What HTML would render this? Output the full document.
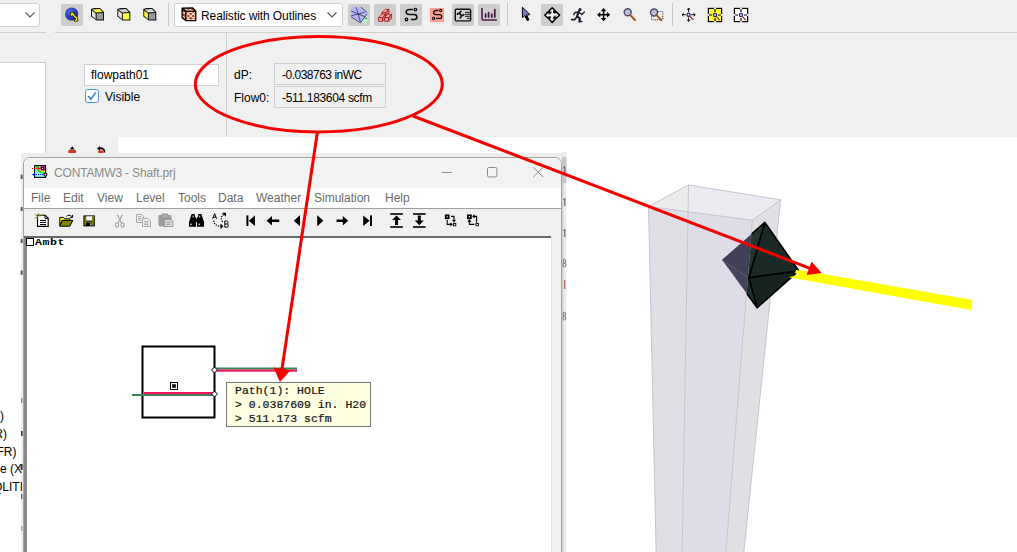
<!DOCTYPE html>
<html><head><meta charset="utf-8">
<style>
*{box-sizing:border-box;margin:0;padding:0}
html,body{width:1017px;height:552px;overflow:hidden;background:#f0f0f0;font-family:"Liberation Sans",sans-serif;font-size:12px;color:#000}
.a{position:absolute}
.t{position:absolute;white-space:nowrap;line-height:14px}
.btn{position:absolute;top:4px;width:22px;height:22px;background:#cdcdcd;border-radius:2px}
</style></head><body>
<!-- ===== main app background ===== -->
<div class="a" id="vp" style="left:118px;top:137px;width:899px;height:415px;background:#fff"></div>
<div class="a" style="left:0;top:62px;width:45px;height:490px;background:#fff;border-top:1px solid #cfcfcf"></div>
<div class="a" style="left:45px;top:62px;width:1px;height:490px;background:#cfcfcf"></div>
<div class="a" style="left:0;top:32px;width:46px;height:1px;background:#d0d0d0"></div>
<div class="a" style="left:55px;top:32px;width:962px;height:1px;background:#d0d0d0"></div>
<div class="a" style="left:226px;top:33px;width:1px;height:104px;background:#d0d0d0"></div>
<!-- top-left combo -->
<div class="a" style="left:-5px;top:3px;width:45px;height:24px;background:#fff;border:1px solid #d0d0d0;border-radius:3px"></div>
<svg class="a" style="left:24px;top:11px" width="12" height="8"><path d="M1.5 1.5 L6 6 L10.5 1.5" fill="none" stroke="#555" stroke-width="1.1"/></svg>
<!-- toolbar buttons -->
<div class="btn" style="left:61px"></div>
<div class="a" style="left:168px;top:3px;width:1px;height:23px;background:#c8c8c8"></div>
<div class="a" style="left:174px;top:3px;width:169px;height:24px;background:#fff;border:1px solid #d0d0d0;border-radius:3px"></div>
<div class="t" id="rwo" style="left:201px;top:9px;font-size:12px;letter-spacing:-0.1px">Realistic with Outlines</div>
<svg class="a" style="left:326px;top:11px" width="12" height="8"><path d="M1.5 1.5 L6 6 L10.5 1.5" fill="none" stroke="#555" stroke-width="1.1"/></svg>
<div class="btn" style="left:348px"></div>
<div class="btn" style="left:374px"></div>
<div class="btn" style="left:400px"></div>
<div class="a" style="left:430px;top:8px;width:14px;height:14px;background:#ff9e8e"></div>
<div class="btn" style="left:452px"></div>
<div class="btn" style="left:478px"></div>
<div class="a" style="left:507px;top:3px;width:1px;height:23px;background:#c8c8c8"></div>
<div class="btn" style="left:541px"></div>
<div class="a" style="left:672px;top:3px;width:1px;height:23px;background:#c8c8c8"></div>

<!-- ===== top toolbar icons ===== -->
<svg class="a" style="left:0;top:0" width="1017" height="32" viewBox="0 0 1017 32">
 <defs>
  <radialGradient id="sph" cx="40%" cy="35%" r="65%"><stop offset="0" stop-color="#5a78e8"/><stop offset="0.6" stop-color="#2a3cc4"/><stop offset="1" stop-color="#1a2490"/></radialGradient>
  <g id="cube"><polygon points="0,2.5 3.5,0 10,0 13,4 13,12.5 5,12.5 0,8.5" fill="#000"/></g>
  <g id="mag"><circle cx="0" cy="0" r="3.5" fill="#bcc0dc" stroke="#4c4c5c" stroke-width="1.4"/><line x1="2.9" y1="2.9" x2="7.2" y2="7.6" stroke="#8a4a1a" stroke-width="2" stroke-linecap="round"/><line x1="3.2" y1="2.6" x2="7.4" y2="7.0" stroke="#d07a30" stroke-width="0.8"/></g>
  <g id="smag"><line x1="1.2" y1="1.4" x2="4.6" y2="5" stroke="#8a3c14" stroke-width="1.3"/><circle cx="0" cy="0" r="1.6" fill="#dfe3f5" stroke="#24247e" stroke-width="1.2"/></g>
 </defs>
 <!-- select sphere -->
 <circle cx="71.7" cy="14" r="6.6" fill="url(#sph)"/>
 <path d="M70.2 12.2 L75 12.6 L73.6 14 L77.6 17.8 L77.9 21 L74.6 21.4 L74.4 19.4 L76 19.2 L72.4 15.4 L70.9 16.9 Z" fill="#ffee00" stroke="#000" stroke-width="0.7" stroke-linejoin="round"/>
 <!-- cubes -->
 <g transform="translate(91,8)">
  <polygon points="0,1 3,0 9,0 13,4 13,12.5 5.5,12.5 0,8.5" fill="#111"/>
  <polygon points="1.2,1.6 8.6,1 11.6,4 4.8,4.6" fill="#ffff40"/>
  <polygon points="5.6,5.4 12,5 12,11.6 5.6,11.6" fill="#9a9a9a"/>
  <polygon points="1,2.6 4.6,5.6 4.6,11 1,8" fill="#e6e6e6"/>
 </g>
 <g transform="translate(117.3,8)">
  <polygon points="0,1 3,0 9,0 13,4 13,12.5 5.5,12.5 0,8.5" fill="#111"/>
  <polygon points="1.2,1.6 8.6,1 11.6,4 4.8,4.6" fill="#cfcfcf"/>
  <polygon points="5.6,5.4 12,5 12,11.6 5.6,11.6" fill="#ffff40"/>
  <polygon points="1,2.6 4.6,5.6 4.6,11 1,8" fill="#e6e6e6"/>
 </g>
 <g transform="translate(143.3,8)">
  <polygon points="0,1 3,0 9,0 13,4 13,12.5 5.5,12.5 0,8.5" fill="#111"/>
  <polygon points="1.2,1.6 8.6,1 11.6,4 4.8,4.6" fill="#d8d8d8"/>
  <polygon points="5.6,5.4 12,5 12,11.6 5.6,11.6" fill="#9a9a9a"/>
  <polygon points="1,2.6 4.6,5.6 4.6,11 1,8" fill="#ffff40"/>
 </g>
 <!-- red cube in combo -->
 <g stroke-linejoin="round">
  <defs><clipPath id="rcf"><rect x="185.7" y="11.4" width="10.1" height="9.2"/></clipPath>
  <clipPath id="rct"><polygon points="182.1,8.1 192.7,8 195.8,11.3 185.7,11.4"/></clipPath>
  <clipPath id="rcl"><polygon points="182.1,8.1 185.7,11.4 185.7,20.6 182.1,17.8"/></clipPath></defs>
  <polygon points="182.1,8.1 192.7,8 195.8,11.3 195.8,20.6 185.7,20.6 182.1,17.8" fill="#b43a10"/>
  <g clip-path="url(#rcf)" stroke="#f6e4dc" stroke-width="1.5" fill="none"><path d="M185.7 11.4 L195.8 20.6 M195.8 11.4 L185.7 20.6 M190.7 11.4 L195.8 16 M185.7 16 L190.7 20.6 M190.7 11.4 L185.7 16 M195.8 16 L190.7 20.6" stroke-width="1.1"/></g>
  <g clip-path="url(#rct)" stroke="#f6e4dc" stroke-width="0.9" fill="none"><path d="M183 11.4 L189 8 M187 11.4 L193 8 M191 11.4 L196 8.6 M184 8 L188.6 11.4 M188 8 L192.8 11.4"/></g>
  <g clip-path="url(#rcl)" stroke="#f6e4dc" stroke-width="0.9" fill="none"><path d="M182.1 12 L185.7 14.4 M182.1 15.6 L185.7 18.4 M182.1 13.6 L185.7 11.8 M182.1 17.6 L185.7 15.4"/></g>
  <path d="M182.1 8.1 L192.7 8 L195.8 11.3 V20.6 H185.7 L182.1 17.8 Z M185.7 20.6 V11.4 L182.1 8.1 M185.7 11.4 L195.8 11.3" fill="none" stroke="#000" stroke-width="1.3"/>
 </g>
 <!-- mesh -->
 <g transform="translate(348,4)">
  <polygon points="3.1,3.1 12.9,3.1 19.1,8.2 19.1,9.8 12.6,18.8 3.1,12.9" fill="#b6b6f4"/>
  <polygon points="19.1,9.8 19.1,18.8 12.6,18.8" fill="#b8f6c8"/>
  <path d="M3.1 7 L17.6 13 M8.2 3.1 L12.4 17.8 M3.1 11.8 L16.9 8.2 M12.9 3.1 L19.1 8.2 M19.1 9.8 L12.6 18.8 L3.1 12.9  M17.2 14.4 H19.1" fill="none" stroke="#2a2a5a" stroke-width="0.75"/>
 </g>
 <!-- red cubes -->
 <g transform="translate(374,4)" stroke="#a01818" stroke-width="0.8" stroke-linejoin="round">
  <polygon points="7.9,8.6 11.100000000000001,5.3999999999999995 14.9,5.3999999999999995 11.7,8.6" fill="#f6b4b4"/><polygon points="11.7,8.6 14.9,5.3999999999999995 14.9,9.2 11.7,12.399999999999999" fill="#e06868"/><rect x="7.9" y="8.6" width="3.8" height="3.8" fill="#f28a8a"/><rect x="8.9" y="9.6" width="1.8" height="1.8" fill="#f8b8b8" stroke="none"/><polygon points="4.6,13.5 7.8,10.3 11.6,10.3 8.399999999999999,13.5" fill="#f6b4b4"/><polygon points="8.399999999999999,13.5 11.6,10.3 11.6,14.1 8.399999999999999,17.3" fill="#e06868"/><rect x="4.6" y="13.5" width="3.8" height="3.8" fill="#f28a8a"/><rect x="5.6" y="14.5" width="1.8" height="1.8" fill="#f8b8b8" stroke="none"/><polygon points="10.6,13.5 13.8,10.3 17.6,10.3 14.399999999999999,13.5" fill="#f6b4b4"/><polygon points="14.399999999999999,13.5 17.6,10.3 17.6,14.1 14.399999999999999,17.3" fill="#e06868"/><rect x="10.6" y="13.5" width="3.8" height="3.8" fill="#f28a8a"/><rect x="11.6" y="14.5" width="1.8" height="1.8" fill="#f8b8b8" stroke="none"/>
 </g>
 <!-- S path -->
 <g transform="translate(400,4)" fill="none" stroke="#111" stroke-width="1.5" stroke-linecap="round">
  <path d="M12.3 5.6 H9.6 C7.2 5.6 6.1 6.8 6.1 8.1 C6.1 9.6 7.4 10.5 9.4 10.5 H13.8 C15.8 10.5 16.9 11.6 16.9 12.9 C16.9 14.3 15.8 15.4 14.2 15.4 H11.4"/>
  <circle cx="15.4" cy="5.6" r="1.25" fill="#e8e8e8" stroke-width="1.3"/><circle cx="6.5" cy="15.5" r="1.25" fill="#e8e8e8" stroke-width="1.3"/>
 </g>
 <g transform="translate(430,8)" fill="none" stroke="#111" stroke-width="1.35" stroke-linecap="round">
  <path d="M8 2.5 H6 C4.3 2.5 3.6 3.5 3.6 4.6 C3.6 5.8 4.5 6.6 6 6.6 H9.6 C11 6.6 11.7 7.5 11.7 8.5 C11.7 9.6 10.9 10.4 9.7 10.4 H6.6"/>
  <circle cx="10.7" cy="2.4" r="1.05" fill="#ffc0b0" stroke-width="1.1"/><circle cx="3.6" cy="10.4" r="1.05" fill="#ffc0b0" stroke-width="1.1"/>
 </g>
 <!-- card -->
 <g transform="translate(452,4)">
  <rect x="3.3" y="5.3" width="15.3" height="11.6" rx="1" fill="#d4d4d4" stroke="#111" stroke-width="1.4"/>
  <path d="M8.9 7.4 C7.4 8.4 7.8 9.8 8.6 10.6 C9.4 11.4 9.8 12.8 8.3 13.8 M5.4 10.2 C6.4 8.8 7.8 9.6 8.6 10.6 C9.4 11.6 10.8 12 11.8 10.6" fill="none" stroke="#111" stroke-width="1.7" stroke-linecap="round"/>
  <path d="M13.4 8.3 H17.4 M13.4 10.3 H17.4 M13.4 12.3 H17.4 M15.4 14.4 H17.2" stroke="#111" stroke-width="1" stroke-linecap="round"/>
 </g>
 <!-- chart -->
 <g transform="translate(478,4)" fill="none" stroke="#4b1e4b" stroke-linecap="round">
  <path d="M4 4.6 V14.4 Q4 16 5.6 16 H18.4" stroke-width="1.6"/>
  <path d="M7.6 10.2 V13 M10.6 8.6 V13 M13.8 10.2 V13 M16.8 5.6 V13" stroke-width="1.8"/>
 </g>
 <!-- cursor -->
 <path d="M522.4 7.2 L522.4 17.6 L525 15.6 L527.4 20.6 L529 19.8 L526.6 15 L530 14.6 Z" fill="#7b7bcc" stroke="#000" stroke-width="1" stroke-linejoin="round"/><path d="M525.6 16 L527.8 20.4" stroke="#000" stroke-width="1.8"/>
 <!-- orbit -->
 <g transform="translate(552.2,15.1)" stroke-linejoin="round">
  <polygon points="0,-7.4 3.2,-4 2.2,-2.2 4,-3.2 7.4,0 4,3.2 2.2,2.2 3.2,4 0,7.4 -3.2,4 -2.2,2.2 -4,3.2 -7.4,0 -4,-3.2 -2.2,-2.2 -3.2,-4" fill="#fff" stroke="#000" stroke-width="1.5"/>
  <path d="M-1.2 -4 C-0.8 -1.6 -1.6 -0.8 -4 -1.2 M1.2 4 C0.8 1.6 1.6 0.8 4 1.2" fill="none" stroke="#000" stroke-width="0.9"/>
  <path d="M0.8 -5.2 L3.6 -2.4 L0.8 -2 Z M-4.2 1.2 L-0.6 1.6 L-2.4 3.6 Z" fill="#000"/>
  <circle cx="3.8" cy="0.4" r="0.9" fill="#c4c4c4"/><circle cx="0.4" cy="3.8" r="0.9" fill="#c4c4c4"/>
 </g>
 <!-- runner -->
 <g transform="translate(571.4,7.9)" fill="#1c1c2c" stroke="#1c1c2c" stroke-linecap="round" stroke-linejoin="round">
  <circle cx="8.6" cy="1.6" r="1.6" stroke="none"/>
  <path d="M7.4 3.6 L5.6 8.4 L8.4 10.4 L8 13.6" fill="none" stroke-width="2.2"/>
  <path d="M5.8 8.6 L3.4 11.6 L0.4 11.8" fill="none" stroke-width="1.8"/>
  <path d="M7.4 4.2 L3.6 4.6 L2.4 6.8" fill="none" stroke-width="1.4"/>
  <path d="M7.6 4.6 L10.4 6.6 L13 4.2" fill="none" stroke-width="1.4"/>
  <path d="M8 13.6 L10.4 13.6" fill="none" stroke-width="1.4"/>
 </g>
 <!-- move 4-way -->
 <g transform="translate(603.6,14.7)" fill="#000" stroke="none">
  <rect x="-0.8" y="-4.4" width="1.6" height="8.8"/><rect x="-4.4" y="-0.8" width="8.8" height="1.6"/>
  <polygon points="0,-6.6 2.8,-3.4 -2.8,-3.4"/><polygon points="0,6.6 2.8,3.4 -2.8,3.4"/>
  <polygon points="-6.6,0 -3.4,-2.8 -3.4,2.8"/><polygon points="6.6,0 3.4,-2.8 3.4,2.8"/>
 </g>
 <!-- magnifiers -->
 <use href="#mag" x="627.7" y="12.3"/>
 <rect x="651.6" y="11.6" width="11.2" height="8.2" fill="none" stroke="#222" stroke-width="1" stroke-dasharray="1 1.2"/>
 <use href="#mag" x="654" y="12.5"/>
 <!-- crosshair zoom -->
 <g transform="translate(688.6,14.7)" fill="none" stroke="#000" stroke-width="1">
  <path d="M-6.6 0 H-2.8 M6.6 0 H2.8 M0 -6.6 V-2.8 M0 6.6 V2.8"/>
  <path d="M-5 -1.4 L-6.6 0 L-5 1.4 M5 -1.4 L6.6 0 L5 1.4 M-1.4 -5 L0 -6.6 L1.4 -5 M-1.4 5 L0 6.6 L1.4 5"/>
  <use href="#smag"/>
 </g>
 <g transform="translate(715,15)" fill="none" stroke="#000">
  <rect x="-6.6" y="-6.6" width="13.2" height="13.2" fill="#ffff2a" stroke-width="1.2"/>
  <path d="M-6.6 0 H-3 M6.6 0 H3 M0 -6.6 V-3 M0 6.6 V3" stroke-width="1.2"/>
  <path d="M-7.4 0 H-6 M7.4 0 H6 M0 -7.4 V-6 M0 7.4 V6" stroke="#f0f0f0" stroke-width="2.2"/>
  <use href="#smag"/>
 </g>
 <g transform="translate(741,15)" fill="none" stroke="#000">
  <rect x="-6.6" y="-6.6" width="13.2" height="13.2" fill="#fff" stroke-width="1.2"/>
  <path d="M-6.6 0 H-3 M6.6 0 H3 M0 -6.6 V-3 M0 6.6 V3" stroke-width="1.2"/>
  <path d="M-7.4 0 H-6 M7.4 0 H6 M0 -7.4 V-6 M0 7.4 V6" stroke="#f0f0f0" stroke-width="2.2"/>
  <use href="#smag"/>
 </g>
</svg>
<!-- properties row -->
<div class="a" style="left:84px;top:64px;width:135px;height:22px;background:#fff;border:1px solid #d0d0d0"></div>
<div class="t" id="fp" style="left:91px;top:68px">flowpath01</div>
<div class="a" style="left:85px;top:89px;width:14px;height:14px;background:#fff;border:1px solid #4a8fdc;border-radius:2.5px"></div>
<svg class="a" style="left:85px;top:89px" width="14" height="14"><path d="M3.2 7 L5.8 10.2 L10.8 3.4" fill="none" stroke="#2f7fdc" stroke-width="1.5"/></svg>
<div class="t" id="vis" style="left:105px;top:90px">Visible</div>
<div class="t" id="dp" style="left:234px;top:68px">dP:</div>
<div class="t" id="fl" style="left:234px;top:91px">Flow0:</div>
<div class="a" style="left:274px;top:63px;width:112px;height:22px;border:1px solid #cfcfcf;background:#f0f0f0"></div>
<div class="a" style="left:274px;top:86px;width:112px;height:22px;border:1px solid #cfcfcf;background:#f0f0f0"></div>
<div class="t" id="v1" style="left:282px;top:68px;letter-spacing:-0.5px">-0.038763 inWC</div>
<div class="t" id="v2" style="left:282px;top:91px;letter-spacing:-0.33px">-511.183604 scfm</div>

<!-- ===== 3D scene ===== -->
<svg class="a" id="scene" style="left:0;top:0" width="1017" height="552" viewBox="0 0 1017 552">
 <defs><clipPath id="vpc"><rect x="118" y="137" width="899" height="415"/></clipPath></defs>
 <g clip-path="url(#vpc)">
  <!-- shaft faces -->
  <polygon points="648.5,206.5 688.5,185 682,560 656.3,560" fill="#dfdee4"/>
  <polygon points="688.5,185 780.6,199.8 743,560 682,560" fill="#dddce7"/>
  <polygon points="752.3,220.2 780.6,199.8 743,560 725.2,560" fill="#e0dfe4"/>
  <polygon points="648.5,206.5 688.5,185 780.6,199.8 752.3,220.2" fill="#fff" fill-opacity="0.42"/>
  <g fill="none" stroke="#c6c5cd" stroke-width="1">
   <polygon points="648.5,206.5 688.5,185 780.6,199.8 752.3,220.2"/>
   <line x1="648.5" y1="206.5" x2="656.3" y2="560"/>
   <line x1="688.5" y1="185" x2="682" y2="560"/>
   <line x1="752.3" y1="220.2" x2="725.2" y2="560"/>
   <line x1="780.6" y1="199.8" x2="743" y2="560"/>
  </g>
  <!-- octahedron -->
  <defs>
   <clipPath id="cl"><polygon points="600,150 752.6,150 752.6,219.9 725.2,560 600,560"/></clipPath>
   <clipPath id="cr"><polygon points="900,150 752.6,150 752.6,219.9 725.2,560 900,560"/></clipPath>
  </defs>
  <g clip-path="url(#cl)">
   <polygon points="764.8,222.4 722,259.8 748.9,277.8" fill="#423f58"/>
   <polygon points="722,259.8 748.9,277.8 757.2,307.7" fill="#46435d"/>
   <line x1="722" y1="259.8" x2="748.9" y2="277.8" stroke="#55526c" stroke-width="0.8"/>
  </g>
  <g clip-path="url(#cr)">
   <polygon points="764.8,222.4 722,259.8 748.9,277.8" fill="#20352f"/>
   <polygon points="722,259.8 748.9,277.8 757.2,307.7" fill="#1d302b"/>
   <path d="M764.8 222.4 L722 259.8 M757.2 307.7 L722 259.8" fill="none" stroke="#000" stroke-width="1.6"/>
  </g>
  <polygon points="764.8,222.4 748.9,277.8 798.7,270.8" fill="#1b2a26"/>
  <polygon points="748.9,277.8 798.7,270.8 757.2,307.7" fill="#17231f"/>
  <g fill="none" stroke="#000" stroke-width="1.7" stroke-linejoin="round" stroke-linecap="round">
   <path d="M764.8 222.4 L748.9 277.8 L798.7 270.8 Z"/>
   <path d="M748.9 277.8 L757.2 307.7 L798.7 270.8"/>
  </g>
  <!-- yellow flow arrow -->
  <polygon points="788.6,277.2 799.4,274.4 794.8,273 796.2,269.9 803,270.5 972.5,300 971,310 800,279.3" fill="#ffff00"/>
 </g>
</svg>

<div class="a" style="left:21px;top:153px;width:545.4px;height:400px;background:#ededed"></div>
<!-- ===== behind-window details ===== -->
<div class="a" style="left:0;top:405px;width:21.5px;height:100px;overflow:hidden">
<div class="t" style="right:17.5px;top:4px">)</div>
<div class="t" style="right:14.5px;top:22px">R)</div>
<div class="t" style="right:5px;top:39.5px">FR)</div>
<div class="t" style="right:-0.5px;top:57px">e (X</div>
<div class="t" style="right:-1.5px;top:74.5px">QLITI</div>
</div>
<svg class="a" style="left:0;top:0" width="1017" height="552" viewBox="0 0 1017 552">
 <!-- mini icons peeking above the window --><clipPath id="mic"><rect x="60" y="140" width="60" height="13"/></clipPath>
 <g clip-path="url(#mic)"><path d="M69.6 149.4 L72.2 146.2 L74.8 149.4 Z" fill="#111"/><rect x="68.4" y="150" width="7.6" height="3" fill="#d9361a"/>
 <path d="M97 148.6 L100 146 L100 147.4 C103.4 147 105.6 149.4 105.4 152.6 L103.8 152.6 C103.8 150.2 102.4 149 100 149.4 L100 151 Z" fill="#111"/><rect x="98.2" y="150.4" width="5.2" height="2.6" fill="#d9361a"/></g>
 <!-- strip to the right of the window -->
 <rect x="562" y="152" width="4.4" height="400" fill="#ececec"/>
 <rect x="562" y="157" width="4.4" height="26" fill="#c6c6c6"/>
 <rect x="562" y="183" width="1.4" height="370" fill="#cfcfcf"/>
 <g fill="#6e6478"><rect x="564.2" y="166" width="1.2" height="8"/><rect x="563.2" y="167" width="1" height="1"/>
  <rect x="564.2" y="198" width="1.2" height="8"/><rect x="563.2" y="199" width="1" height="1"/>
  <rect x="564.2" y="229" width="1.2" height="8"/><rect x="563.2" y="230" width="1" height="1"/></g>
 <g fill="none" stroke="#6e6478" stroke-width="0.9"><ellipse cx="564.4" cy="261" rx="1.3" ry="1.8"/><ellipse cx="564.4" cy="265" rx="1.5" ry="2"/>
  <ellipse cx="564.4" cy="314" rx="1.3" ry="1.8"/><ellipse cx="564.4" cy="318" rx="1.5" ry="2"/></g>
 <rect x="564.2" y="280" width="1.1" height="9" fill="#b04a4a"/>
 <!-- marks left of the window -->
 <g fill="#333"><rect x="20.6" y="174.6" width="2" height="4.4" fill="#555"/><rect x="20.6" y="207" width="2" height="4" fill="#555"/><rect x="20.6" y="239" width="2" height="4" fill="#555"/><rect x="20.6" y="270.4" width="2" height="4.4" fill="#555"/>
  <rect x="21" y="398" width="1.4" height="5" fill="#6a8ad0"/><rect x="21" y="431" width="1.6" height="5"/><rect x="20.6" y="464" width="2" height="6"/><rect x="21" y="494" width="1.4" height="5" fill="#666"/><rect x="21" y="526" width="1.4" height="5" fill="#8aa0d8"/></g>
</svg>
<!-- ===== CONTAM window ===== -->
<div class="a" id="win" style="left:23px;top:157px;width:539px;height:400px;background:#f0f0f0;border:1px solid #a4a4a4;border-radius:7px 7px 0 0;overflow:hidden">
 <div class="a" style="left:0;top:0;width:539px;height:30px;background:#f3f3f3"></div>
 <div class="t" id="ttl" style="left:30px;top:8px;color:#8a8a8a;font-size:12px;letter-spacing:-0.15px">CONTAMW3 - Shaft.prj</div>
 <div class="a" style="left:0;top:30px;width:539px;height:20px;background:#fff"></div>
 <div class="t" id="m1" style="left:7px;top:33px;color:#6a6a6a">File</div>
 <div class="t" id="m2" style="left:39px;top:33px;color:#6a6a6a">Edit</div>
 <div class="t" id="m3" style="left:73px;top:33px;color:#6a6a6a">View</div>
 <div class="t" id="m4" style="left:112px;top:33px;color:#6a6a6a">Level</div>
 <div class="t" id="m5" style="left:154px;top:33px;color:#6a6a6a">Tools</div>
 <div class="t" id="m6" style="left:194px;top:33px;color:#6a6a6a">Data</div>
 <div class="t" id="m7" style="left:232px;top:33px;color:#6a6a6a">Weather</div>
 <div class="t" id="m8" style="left:290px;top:33px;color:#6a6a6a">Simulation</div>
 <div class="t" id="m9" style="left:361px;top:33px;color:#6a6a6a">Help</div>
 <div class="a" style="left:0;top:50px;width:539px;height:1px;background:#a0a0a0"></div>
 <div class="a" style="left:0;top:78px;width:527px;height:2px;background:#696969"></div>
 <div class="a" style="left:0;top:80px;width:3px;height:330px;background:#8a8a8a"></div>
 <div class="a" id="canvas" style="left:3px;top:80px;width:524px;height:330px;background:#fff"></div>
 <div class="a" style="left:527px;top:78px;width:1px;height:330px;background:#e3e3e3"></div>
</div>

<!-- ===== CONTAM window icons ===== -->
<svg class="a" style="left:0;top:0" width="1017" height="552" viewBox="0 0 1017 552">
 <!-- title icon -->
 <defs><clipPath id="tic"><rect x="34.6" y="165.6" width="11" height="11.8"/></clipPath></defs>
 <rect x="34.6" y="165.6" width="11" height="11.8" fill="#7ffcf8"/>
 <g clip-path="url(#tic)">
  <circle cx="43" cy="166.6" r="6.9" fill="#10e020"/>
  <circle cx="43.2" cy="167.8" r="4.6" fill="#f6f600"/>
  <circle cx="42.8" cy="168.2" r="2.9" fill="#ff78cc"/>
 </g>
 <rect x="34.6" y="165.6" width="11" height="11.8" fill="none" stroke="#000" stroke-width="1.1"/>
 <rect x="41.3" y="167.1" width="2.6" height="2.6" fill="#ff9ad8" stroke="#000" stroke-width="1.1"/>
 <g fill="#f00" shape-rendering="crispEdges"><rect x="32" y="168" width="1" height="1"/><rect x="34" y="168" width="1" height="1"/><rect x="36" y="168" width="1" height="1"/></g>
 <path d="M38.2 166.8 L40.6 168.5 L38.2 170.2 Z" fill="#f00"/>
 <g fill="#00f" shape-rendering="crispEdges"><rect x="36" y="174" width="1" height="1.2"/><rect x="38" y="174" width="1" height="1.2"/><rect x="40" y="174" width="1" height="1.2"/><rect x="42" y="174" width="1" height="1.2"/></g>
 <path d="M34.8 172.7 L32 174.6 L34.8 176.5 Z" fill="#00f"/>
 <circle cx="45.4" cy="174.6" r="1.5" fill="#fff" stroke="#000" stroke-width="1.1"/>
 <!-- window controls -->
 <g fill="none" stroke="#8c8c8c" stroke-width="1">
  <path d="M442 172.5 H452"/>
  <rect x="487.5" y="167.5" width="9.4" height="9.4" rx="1.2"/>
  <path d="M533.3 167.4 L543.1 177.1 M543.1 167.4 L533.3 177.1"/>
 </g>
 <!-- new -->
 <path d="M37.5 215.2 H45.2 L48.2 218.2 V226.4 H37.5 Z" fill="#fff" stroke="#000" stroke-width="1.1"/>
 <path d="M45 215.2 V218.4 H48.2" fill="none" stroke="#000" stroke-width="1"/>
 <path d="M40 220.5 H46 M40 222.5 H46 M40 224.5 H46" stroke="#000" stroke-width="1" shape-rendering="crispEdges"/>
 <path d="M35 214 L38.4 217 M38.6 213.4 L39.4 216.4 M34.8 217.6 L38 217.8 M42 214.4 L40.4 216.4" stroke="#8e8e00" stroke-width="1"/>
 <!-- open -->
 <path d="M59.8 217.4 H63.6 L64.8 218.8 H70 V220.4 H62 L59.8 225.6 Z" fill="#ffff00" stroke="#000" stroke-width="1"/>
 <path d="M62.4 220.4 H72.8 L69.8 226.2 H59.8 Z" fill="#848400" stroke="#000" stroke-width="1"/>
 <path d="M66.4 216.4 C67.6 214.8 70.4 214.6 71.8 216.6 M72.6 214.8 V217.4 H70" fill="none" stroke="#000" stroke-width="1"/>
 <!-- save -->
 <rect x="83.4" y="215.4" width="11.4" height="11" fill="#000"/>
 <rect x="84.4" y="216.4" width="1.8" height="9" fill="#848400"/>
 <rect x="92" y="216.4" width="1.8" height="9" fill="#848400"/>
 <rect x="86.2" y="221.4" width="5.8" height="1.2" fill="#848400"/>
 <rect x="86.2" y="216.2" width="5.8" height="4.4" fill="#f4f4f4"/>
 <rect x="90.2" y="223.2" width="1.2" height="2.4" fill="#ddd"/>
 <rect x="92.6" y="216.2" width="1" height="1" fill="#ddd"/>
 <!-- cut -->
 <g fill="none" stroke="#a3a3a3" stroke-width="1.1">
  <path d="M117.2 214.4 L121.6 223 M122.4 214.4 L118 223"/>
  <ellipse cx="117" cy="225" rx="1.6" ry="2.2"/><ellipse cx="122.6" cy="225" rx="1.6" ry="2.2"/>
 </g>
 <!-- copy -->
 <g fill="#f0f0f0" stroke="#a8a8a8" stroke-width="1">
  <path d="M136.5 214.5 H141.6 L143.6 216.5 V222.5 H136.5 Z"/>
  <path d="M138 216.6 H141.4 M138 218.4 H141.4 M138 220.2 H141.4" />
  <path d="M142.5 218.5 H148 L150.5 221 V226.5 H142.5 Z"/>
  <path d="M144.2 221.4 H148.6 M144.2 223 H148.6 M144.2 224.6 H148.6"/>
 </g>
 <!-- paste -->
 <g>
  <rect x="158.4" y="215" width="13" height="11.4" rx="1.4" fill="#9c9c9c"/>
  <rect x="161.6" y="213.4" width="6.6" height="3" rx="1" fill="#9c9c9c"/>
  <rect x="162.6" y="215.6" width="4.6" height="0.9" fill="#c8c8c8"/>
  <path d="M164.5 219.5 H171 L172.8 221 V226.5 H164.5 Z" fill="#d8d8d8" stroke="#9c9c9c" stroke-width="1"/>
  <path d="M166 222.4 H170.6 M166 224.4 H170.6" stroke="#9c9c9c" stroke-width="0.9"/>
 </g>
 <!-- binoculars -->
 <g fill="#000">
  <path d="M191.6 214 H194.8 V216 L196 218 V226.8 H189 V222 Z"/>
  <path d="M198.2 214 H201.4 L204 222 V226.8 H197 V218 L198.2 216 Z"/>
  <rect x="195.4" y="218.6" width="2.2" height="3.4"/>
  <rect x="190.4" y="223.6" width="1.2" height="1.6" fill="#fff"/><rect x="198.6" y="223.6" width="1.2" height="1.6" fill="#fff"/>
  <rect x="192.6" y="215.6" width="1" height="2" fill="#ddd"/><rect x="199.2" y="215.6" width="1" height="2" fill="#ddd"/>
 </g>
 <!-- A->B -->
 <g fill="none" stroke="#000">
  <path d="M212.6 218.8 L214.6 213.6 L216.6 218.8 M213.4 217.2 H215.8" stroke-width="1"/>
  <path d="M213.8 220.6 C214.2 224.8 217 226.4 220.6 226.2" stroke-width="1.4" stroke-dasharray="1.1 1.3"/>
  <path d="M220.4 223.4 L223.4 226.2 L220.4 229 Z" fill="#000" stroke="none"/>
  <path d="M222.6 221.8 C220.8 219.2 221 216.4 223.2 214.6" stroke-width="1.4" stroke-dasharray="1.1 1.3"/>
  <path d="M222.6 213.4 H225.4 V216.2 M225.4 213.4 L223.4 215.4" stroke-width="1.1"/>
  <path d="M224.8 221 V227.2 H227 C228.8 227.2 228.8 224 227 224 H224.8 M227 224 C228.4 224 228.4 221 226.8 221 H224.8" stroke-width="1"/>
 </g>
 <!-- nav arrows -->
 <g fill="#000">
  <rect x="246.4" y="215.4" width="2" height="10.6"/><path d="M255 215.4 V226 L248.8 220.7 Z"/>
  <path d="M266.6 220.7 L272 216 V219.4 H279.2 V222 H272 V225.4 Z"/>
  <path d="M300 215.2 V226.2 L293.8 220.7 Z"/>
  <path d="M317.2 215.2 V226.2 L323.4 220.7 Z"/>
  <path d="M348.2 220.7 L342.8 216 V219.4 H336.6 V222 H342.8 V225.4 Z"/>
  <rect x="370" y="215.4" width="2" height="10.6"/><path d="M363.2 215.4 V226 L369.6 220.7 Z"/>
  <rect x="390.2" y="213.2" width="12.6" height="1.6"/><rect x="390.2" y="226.2" width="12.6" height="1.6"/>
  <path d="M396.5 215.4 L401 220 H398 V225 H395 V220 H392 Z"/>
  <rect x="413" y="213.2" width="12.6" height="1.6"/><rect x="413" y="226.2" width="12.6" height="1.6"/>
  <path d="M419.3 225.2 L423.8 220.6 H420.8 V215.6 H417.8 V220.6 H414.8 Z"/>
 </g>
 <g fill="none" stroke="#000" stroke-width="1.1">
  <rect x="445.4" y="215" width="3.6" height="3.6" fill="#000"/><rect x="446.6" y="216.2" width="1.2" height="1.2" fill="#fff" stroke="none"/>
  <path d="M451 216.4 H454 V221"/><path d="M452.6 219.8 L454 221.6 L455.4 219.8" />
  <path d="M447.2 220 V224.4 H451.6"/><path d="M450.4 223 L452 224.4 L450.4 225.8"/>
  <rect x="453.4" y="223.4" width="2.4" height="2.4" stroke-width="0.9"/>
  <rect x="467.6" y="215" width="3.6" height="3.6" fill="#000"/><rect x="468.8" y="216.2" width="1.2" height="1.2" fill="#fff" stroke="none"/>
  <path d="M473.4 216.4 H476.6 V222.6"/><path d="M474.6 215 L473 216.4 L474.6 217.8"/>
  <path d="M469.4 220.4 V224.4 H474.4"/><path d="M468 221.8 L469.4 220 L470.8 221.8"/>
  <rect x="476" y="223.4" width="2.4" height="2.4" stroke-width="0.9"/>
 </g>
</svg>
<!-- canvas content -->
<svg class="a" style="left:0;top:0" width="1017" height="552" viewBox="0 0 1017 552">
 <rect x="142.5" y="346.5" width="72" height="71" fill="none" stroke="#000" stroke-width="2"/>
 <rect x="215" y="367.5" width="82" height="2" fill="#2e8b57"/>
 <rect x="215" y="369.5" width="82" height="2.2" fill="#f0145a"/>
 <rect x="132" y="394" width="83" height="2" fill="#2e8b57"/>
 <rect x="144" y="392" width="71" height="2.2" fill="#f0145a"/>
 <path d="M211.5 370 L214.5 367 L217.5 370 L214.5 373 Z" fill="#fff" stroke="#000" stroke-width="1"/>
 <path d="M211.5 394 L214.5 391 L217.5 394 L214.5 397 Z" fill="#fff" stroke="#000" stroke-width="1"/>
 <rect x="170.5" y="382.5" width="7" height="7" fill="#fff" stroke="#000" stroke-width="1"/>
 <rect x="172.2" y="384.2" width="3.6" height="3.6" fill="#000"/>
 <rect x="226.5" y="382.5" width="144" height="44" fill="#ffffe1" stroke="#767676" stroke-width="1"/>
</svg>
<svg class="a" style="left:26px;top:238px" width="44" height="9" viewBox="0 0 44 9"><rect x="0.5" y="0.5" width="7" height="7" fill="#fff" stroke="#000" stroke-width="1"/></svg>
<div class="t" id="ambt" style="left:34.5px;top:237.5px;font-family:'Liberation Mono',monospace;font-weight:bold;font-size:10px;letter-spacing:0.5px;line-height:12px;transform-origin:0 0;transform:scale(1.16,0.85)">Ambt</div>
<div class="t" id="tip" style="left:235px;top:384px;font-family:'Liberation Mono',monospace;font-size:11.5px;line-height:14px;color:#111;white-space:pre;-webkit-text-stroke:0.22px #222">Path(1): HOLE
&gt; 0.0387609 in. H20
&gt; 511.173 scfm</div>
<!-- ===== red annotations ===== -->
<svg class="a" style="left:0;top:0" width="1017" height="552" viewBox="0 0 1017 552">
 <ellipse cx="318.8" cy="84.2" rx="123.5" ry="47.7" fill="none" stroke="#f40000" stroke-width="3"/>
 <line x1="317.4" y1="132" x2="282" y2="369" stroke="#f40000" stroke-width="3"/>
 <polygon points="280,382 273.4,367.6 290.6,370.2" fill="#f40000"/>
 <line x1="413" y1="116" x2="810" y2="268.3" stroke="#f40000" stroke-width="3"/>
 <polygon points="821.7,272.9 811.6,261.4 806.6,275" fill="#f40000"/>
</svg>
</body></html>
